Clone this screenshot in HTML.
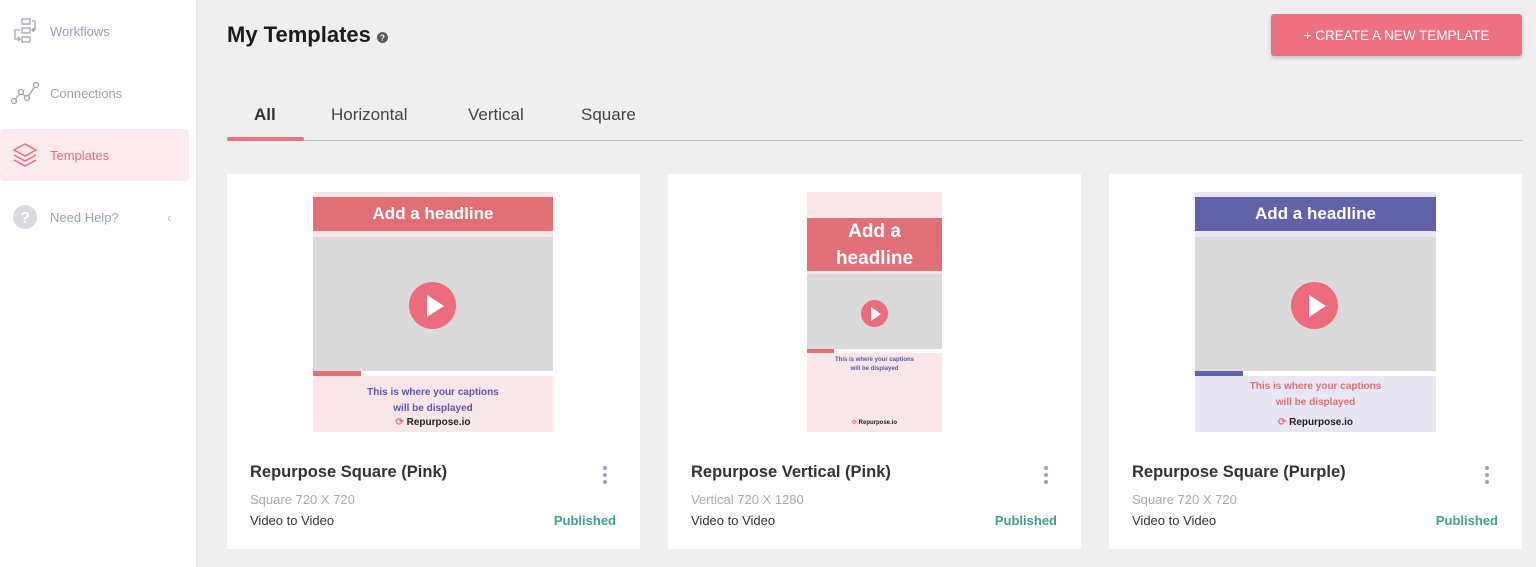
<!DOCTYPE html>
<html><head><meta charset="utf-8"><style>
*{margin:0;padding:0;box-sizing:border-box}
body{width:1536px;height:567px;overflow:hidden;background:#efefef;font-family:"Liberation Sans",sans-serif;position:relative}
.side{position:absolute;left:0;top:0;width:197px;height:567px;background:#fff;border-right:1px solid #e6e6e6}
.nav{position:absolute;left:0;width:189px;height:52px;display:flex;align-items:center;padding-left:50px;font-size:13px;color:#9aa0ac}
.nav svg{position:absolute;left:10px}
.act{background:#fcebee;color:#ec6e7e;border-radius:4px}
.abs{position:absolute}
h1{position:absolute;left:227px;top:22px;font-size:22px;font-weight:bold;color:#1c1c1c}
.btn{position:absolute;left:1271px;top:14px;width:251px;height:42px;background:#ee7182;border-radius:3px;color:#fff;font-size:13.5px;display:flex;align-items:center;justify-content:center;box-shadow:0 2px 4px rgba(0,0,0,.2)}
.tab{position:absolute;top:105px;font-size:17px;color:#444}
.card{position:absolute;top:174px;width:413px;height:375px;background:#fff}
.thumb{position:absolute;top:18px;background:#f8e6e9;overflow:hidden}
.hl{position:absolute;left:0;right:0;color:#fff;font-weight:bold;text-align:center}
.vid{position:absolute;left:0;right:0;background:#dadada}
.play{position:absolute;border-radius:50%;background:#ec6b7c}
.play:after{content:"";position:absolute;border-style:solid;border-color:transparent transparent transparent #fff;left:38%;top:27%;border-width:11px 0 11px 17px}
.small:after{left:36%;top:25%;border-width:7px 0 7px 10px}
.cap{position:absolute;left:0;right:0;text-align:center;color:#5a58a8;font-weight:bold}
.logo{position:absolute;left:0;right:0;text-align:center;color:#222;font-weight:bold}
.t{position:absolute;left:23px;top:289px;font-size:16.5px;color:#333;font-weight:bold}
.s{position:absolute;left:23px;top:318px;font-size:13px;color:#aaa}
.v{position:absolute;left:23px;top:339px;font-size:13px;color:#333}
.p{position:absolute;right:24px;top:339px;font-size:13px;color:#3fa08a;font-weight:bold}
.dots{position:absolute;right:33px;top:292px;width:4px}
.dots i{display:block;width:4px;height:4px;border-radius:50%;background:#9aa4b8;margin-bottom:3px}
</style></head><body>
<div class="side">
<div class="nav" style="top:5px"><svg width="30" height="30" viewBox="0 0 30 30" fill="none" stroke="#a0a4ad" stroke-width="1.3"><rect x="12" y="3" width="8" height="5"/><rect x="12" y="12" width="8" height="5"/><rect x="12" y="21" width="8" height="5"/><path d="M10 14H5v9h5M8 21l2 2-2 2M22 5h3v9h-3M24 12l-2 2 2 2"/></svg>Workflows</div>
<div class="nav" style="top:67px"><svg width="30" height="30" viewBox="0 0 30 30" fill="none" stroke="#a0a4ad" stroke-width="1.3"><circle cx="4" cy="23" r="2.5"/><circle cx="11" cy="14" r="2.5"/><circle cx="17" cy="20" r="2.5"/><circle cx="26" cy="7" r="2.5"/><path d="M5.5 21l4-5M13 16l2.5 2.5M18.5 18l6-9"/></svg>Connections</div>
<div class="nav act" style="top:129px"><svg width="30" height="30" viewBox="0 0 30 30" fill="none" stroke="#ec6e7e" stroke-width="1.5"><path d="M15 4l11 6-11 6-11-6z"/><path d="M4 15l11 6 11-6"/><path d="M4 20l11 6 11-6"/></svg>Templates</div>
<div class="nav" style="top:191px"><svg width="30" height="30" viewBox="0 0 30 30"><circle cx="15" cy="15" r="12" fill="#d8dadf"/><text x="15" y="21" font-size="16" font-weight="bold" text-anchor="middle" fill="#fff" font-family="Liberation Sans">?</text></svg>Need Help?<span class="abs" style="left:167px;color:#bbb">‹</span></div>
</div>
<h1>My Templates <svg width="11" height="11" viewBox="0 0 11 11" style="vertical-align:-1px"><circle cx="5.5" cy="5.5" r="5.5" fill="#555b66"/><text x="5.5" y="8.5" font-size="8" font-weight="bold" text-anchor="middle" fill="#fff" font-family="Liberation Sans">?</text></svg></h1>
<div class="btn">+ CREATE A NEW TEMPLATE</div>
<div class="tab" style="left:254px;font-weight:bold;color:#333">All</div>
<div class="tab" style="left:331px">Horizontal</div>
<div class="tab" style="left:468px">Vertical</div>
<div class="tab" style="left:581px">Square</div>
<div class="abs" style="left:227px;top:140px;width:1295px;height:1px;background:#bbb"></div>
<div class="abs" style="left:227px;top:137px;width:77px;height:4px;background:#ee7182;border-radius:2px"></div>

<div class="card" style="left:227px">
<div class="thumb" style="left:86px;width:240px;height:240px">
<div class="hl" style="top:5px;height:34px;background:#e06f76;font-size:17px;line-height:34px">Add a headline</div>
<div class="vid" style="top:45px;height:134px"></div>
<div class="play" style="left:96px;top:90px;width:47px;height:47px"></div>
<div class="abs" style="left:0;top:179px;width:240px;height:5px;background:#fff"></div>
<div class="abs" style="left:0;top:179px;width:48px;height:5px;background:#e06f76"></div>
<div class="cap" style="top:193px;font-size:10px;line-height:16px">This is where your captions<br>will be displayed</div>
<div class="logo" style="top:225px;font-size:10px"><span style="color:#ec6b7c">⟳</span> Repurpose.io</div>
</div>
<div class="t">Repurpose Square (Pink)</div><div class="dots"><i></i><i></i><i></i></div>
<div class="s">Square 720 X 720</div><div class="v">Video to Video</div><div class="p">Published</div>
</div>

<div class="card" style="left:668px">
<div class="thumb" style="left:139px;width:135px;height:240px">
<div class="hl" style="top:26px;height:53px;background:#e06f76;font-size:19px;line-height:27px">Add a<br>headline</div>
<div class="vid" style="top:82px;height:75px"></div>
<div class="play small" style="left:54px;top:108px;width:27px;height:27px"></div>
<div class="abs" style="left:0;top:157px;width:135px;height:4px;background:#fff"></div>
<div class="abs" style="left:0;top:157px;width:27px;height:4px;background:#e06f76"></div>
<div class="cap" style="top:164px;font-size:6px;line-height:9px">This is where your captions<br>will be displayed</div>
<div class="logo" style="top:227px;font-size:6px"><span style="color:#ec6b7c">⟳</span> Repurpose.io</div>
</div>
<div class="t">Repurpose Vertical (Pink)</div><div class="dots"><i></i><i></i><i></i></div>
<div class="s">Vertical 720 X 1280</div><div class="v">Video to Video</div><div class="p">Published</div>
</div>

<div class="card" style="left:1109px">
<div class="thumb" style="left:86px;width:241px;height:240px;background:#e8e6f3">
<div class="hl" style="top:5px;height:34px;background:#6361a8;font-size:17px;line-height:34px">Add a headline</div>
<div class="vid" style="top:45px;height:134px"></div>
<div class="play" style="left:96px;top:90px;width:47px;height:47px"></div>
<div class="abs" style="left:0;top:179px;width:241px;height:5px;background:#fff"></div>
<div class="abs" style="left:0;top:179px;width:48px;height:5px;background:#6361a8"></div>
<div class="cap" style="top:187px;font-size:10px;line-height:16px;color:#e0707a">This is where your captions<br>will be displayed</div>
<div class="logo" style="top:225px;font-size:10px"><span style="color:#ec6b7c">⟳</span> Repurpose.io</div>
</div>
<div class="t">Repurpose Square (Purple)</div><div class="dots"><i></i><i></i><i></i></div>
<div class="s">Square 720 X 720</div><div class="v">Video to Video</div><div class="p">Published</div>
</div>
</body></html>
